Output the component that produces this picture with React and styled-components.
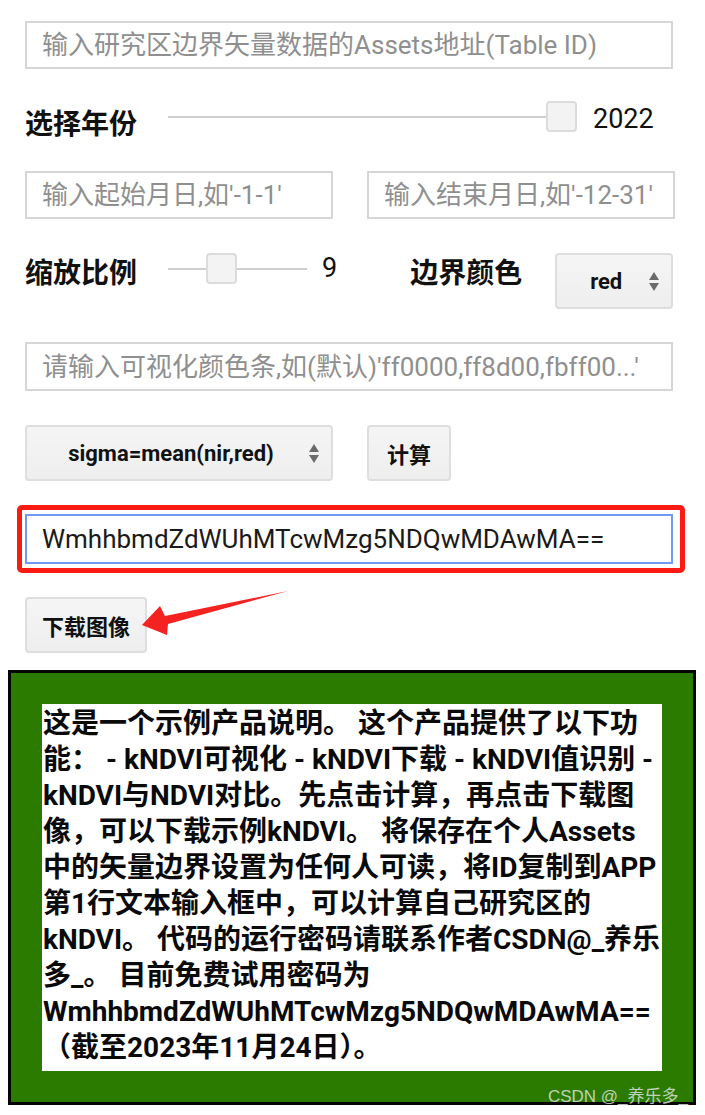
import React from "react";
import styled, { createGlobalStyle } from "styled-components";

//-----------------------------------------------------------------------------------------------

const GlobalStyle = createGlobalStyle`
	html, body {
		margin: 0;
		padding: 0;
		background: #ffffff;
	}
	body {
		font-family: Roboto, "Noto Sans CJK SC", sans-serif;
		color: #111;
	}
`;

const Page = styled.main`
	width: 705px;
	padding-bottom: 11px;
`;

const Controls = styled.section`
	display: flex;
	flex-direction: column;
	align-items: flex-start;
	padding: 21px 0 0 25px;
	width: 650px;
`;

const TextBox = styled.input`
	box-sizing: border-box;
	width: ${(p) => p.$width || 648}px;
	height: ${(p) => p.$height || 48}px;
	margin-top: ${(p) => p.$mt || 0}px;
	padding: 0 0 0 15px;
	border: 2px solid ${(p) => (p.$focused ? "#6f9cf2" : "#d6d6d6")};
	border-radius: 0;
	background: #fff;
	font-family: Roboto, "Noto Sans CJK SC", sans-serif;
	font-size: 26px;
	color: #1a1a1a;
	outline: none;

	&::placeholder {
		color: #8f8f8f;
	}
`;

const Row = styled.div`
	display: flex;
	align-items: ${(p) => p.$align || "flex-start"};
	margin-top: ${(p) => p.$mt || 0}px;
	height: ${(p) => p.$height}px;
	gap: ${(p) => p.$gap || 0}px;
`;

const Label = styled.span`
	font-size: 28px;
	font-weight: 700;
	line-height: 28px;
	color: #111;
	width: ${(p) => p.$width}px;
	margin-top: ${(p) => p.$mt || 0}px;
	margin-left: ${(p) => p.$ml || 0}px;
	white-space: nowrap;
`;

const Slider = styled.div`
	position: relative;
	width: ${(p) => p.$width}px;
	height: 31px;
	display: flex;
	align-items: center;

	&::before {
		content: "";
		display: block;
		width: 100%;
		height: 2px;
		background: #cfcfcf;
	}
`;

const Thumb = styled.span`
	position: absolute;
	top: 0;
	left: ${(p) => p.$left}px;
	box-sizing: border-box;
	width: 31px;
	height: 31px;
	border: 2px solid #dcdcdc;
	border-radius: 4px;
	background: #f3f3f3;
`;

const Value = styled.span`
	font-size: 27px;
	line-height: 31px;
	color: #111;
	margin-left: ${(p) => p.$ml}px;
	margin-top: ${(p) => p.$mt || 0}px;
`;

const GrayButton = styled.button`
	box-sizing: border-box;
	display: flex;
	align-items: center;
	width: ${(p) => p.$width}px;
	height: 56px;
	margin-top: ${(p) => p.$mt || 0}px;
	padding: 0;
	border: 2px solid #dedede;
	border-radius: 4px;
	background: linear-gradient(#f5f5f5, #eeeeee);
	font-family: Roboto, "Noto Sans CJK SC", sans-serif;
	font-size: 22px;
	font-weight: 700;
	color: #111;
	cursor: pointer;
`;

const ButtonText = styled.span`
	flex: 1;
	text-align: center;
	padding-left: ${(p) => p.$pl || 0}px;
`;

const Arrows = styled.svg`
	flex: none;
	margin-right: 12px;
`;

const Highlight = styled.div`
	margin: 24px 0 0 -8px;
	padding: 4px 7px 4px 3px;
	border: 5px solid #fb1b15;
	border-radius: 5px;
`;

const DownloadRow = styled.div`
	position: relative;
	margin-top: 24px;
`;

const Pointer = styled.svg`
	position: absolute;
	left: 105px;
	top: -12px;
`;

const Panel = styled.section`
	position: relative;
	box-sizing: border-box;
	width: 688px;
	margin: 17px 0 0 8px;
	padding: 31px;
	border: 3px solid #050505;
	background: #2a7b00;
`;

const Description = styled.p`
	margin: 0;
	padding: 2px 0 5px 1px;
	background: #ffffff;
	font-size: 28px;
	font-weight: 700;
	line-height: 36px;
	color: #0a0a0a;
`;

const Watermark = styled.span`
	position: absolute;
	right: 5px;
	bottom: -5px;
	font-family: "Liberation Sans", "Noto Sans CJK SC", sans-serif;
	font-size: 17px;
	color: rgba(235, 235, 235, 0.78);
`;

//-----------------------------------------------------------------------------------------------

const SelectArrows = () => (
	<Arrows width="10" height="19" viewBox="0 0 10 19">
		<path d="M5 0 L10 8 L0 8 Z" fill="#6b6b6b" />
		<path d="M0 11 L10 11 L5 19 Z" fill="#6b6b6b" />
	</Arrows>
);

export default function App() {
	return (
		<>
			<GlobalStyle />
			<Page>
				<Controls>
					<TextBox placeholder="输入研究区边界矢量数据的Assets地址(Table ID)" />

					<Row $mt={32} $height={37}>
						<Label $width={143} $mt={10}>
							选择年份
						</Label>
						<Slider $width={409}>
							<Thumb $left={378} />
						</Slider>
						<Value $ml={16} $mt={3}>
							2022
						</Value>
					</Row>

					<Row $mt={33} $gap={34}>
						<TextBox $width={308} placeholder="输入起始月日,如'-1-1'" />
						<TextBox $width={308} placeholder="输入结束月日,如'-12-31'" />
					</Row>

					<Row $mt={34} $height={56}>
						<Label $width={143} $mt={7}>
							缩放比例
						</Label>
						<Slider $width={139}>
							<Thumb $left={38} />
						</Slider>
						<Value $ml={15}>9</Value>
						<Label $width={145} $mt={7} $ml={73}>
							边界颜色
						</Label>
						<GrayButton $width={118}>
							<ButtonText $pl={6}>red</ButtonText>
							<SelectArrows />
						</GrayButton>
					</Row>

					<TextBox
						$mt={33}
						$height={49}
						placeholder="请输入可视化颜色条,如(默认)'ff0000,ff8d00,fbff00...'"
					/>

					<Row $mt={34} $gap={34}>
						<GrayButton $width={308}>
							<ButtonText $pl={6}>sigma=mean(nir,red)</ButtonText>
							<SelectArrows />
						</GrayButton>
						<GrayButton $width={84}>
							<ButtonText>计算</ButtonText>
						</GrayButton>
					</Row>

					<Highlight>
						<TextBox
							$focused
							$height={50}
							defaultValue="WmhhbmdZdWUhMTcwMzg5NDQwMDAwMA=="
						/>
					</Highlight>

					<DownloadRow>
						<GrayButton $width={122}>
							<ButtonText>下载图像</ButtonText>
						</GrayButton>
						<Pointer width="165" height="55" viewBox="0 0 165 55">
							<path
								d="M158 6 L35 31 L30 21 L12 40 L37 50 L38 39 Z"
								fill="#f52222"
							/>
						</Pointer>
					</DownloadRow>
				</Controls>

				<Panel>
					<Description>
						这是一个示例产品说明。 这个产品提供了以下功能： - kNDVI可视化 -
						kNDVI下载 - kNDVI值识别 -
						kNDVI与NDVI对比。先点击计算，再点击下载图像，可以下载示例kNDVI。
						将保存在个人Assets中的矢量边界设置为任何人可读，将ID复制到APP第1行文本输入框中，可以计算自己研究区的kNDVI。
						代码的运行密码请联系作者CSDN@_养乐多_。
						目前免费试用密码为WmhhbmdZdWUhMTcwMzg5NDQwMDAwMA==（截至2023年11月24日）。
					</Description>
					<Watermark>CSDN @_养乐多_</Watermark>
				</Panel>
			</Page>
		</>
	);
}
